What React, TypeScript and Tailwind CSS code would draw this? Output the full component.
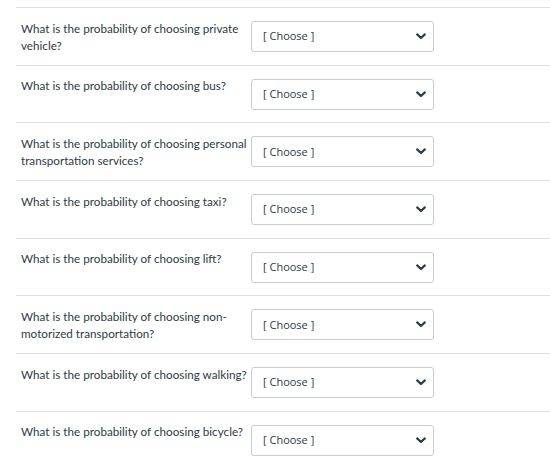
import React from "react";

const questions = [
  "What is the probability of choosing private vehicle?",
  "What is the probability of choosing bus?",
  "What is the probability of choosing personal transportation services?",
  "What is the probability of choosing taxi?",
  "What is the probability of choosing lift?",
  "What is the probability of choosing non-motorized transportation?",
  "What is the probability of choosing walking?",
  "What is the probability of choosing bicycle?",
];

function Chevron() {
  return (
    <svg width="10" height="7" viewBox="0 0 10 7" className="text-[#2d3b45]">
      <path d="M1.2 1.4 L5 5 L8.8 1.4" fill="none" stroke="currentColor" strokeWidth="2.2" strokeLinecap="round" strokeLinejoin="round" />
    </svg>
  );
}

export default function App() {
  return (
    <div className="w-[550px] h-[474px] bg-white pt-[7px] pl-[16px] overflow-hidden">
      {questions.map((q, i) => (
        <div key={i} className="h-[57.7px] border-t border-[#dfe2e4] flex items-start">
          <div className="w-[233px] pl-[5px] pt-[11.5px] text-[11.7px] leading-[17px] text-[#2d3b45]" style={{ fontFamily: "Lato, 'Noto Sans', sans-serif" }}>
            {q}
          </div>
          <div className="ml-[2px] mt-[13px] w-[183px] h-[31px] border border-[#c7cdd1] rounded-[3px] flex items-center justify-between pl-[11px] pr-[7px] bg-white">
            <span className="text-[11px] text-[#2d3b45]" style={{ fontFamily: "'Open Sans', sans-serif" }}>[ Choose ]</span>
            <Chevron />
          </div>
        </div>
      ))}
    </div>
  );
}
